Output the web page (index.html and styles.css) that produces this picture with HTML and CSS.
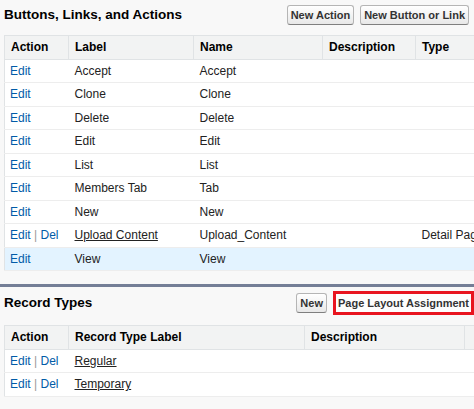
FILE: index.html
```html
<!DOCTYPE html>
<html lang="en">
<head>
  <meta charset="UTF-8">
  <title>Buttons, Links, and Actions</title>
  <link rel="stylesheet" href="styles.css">
</head>
<body>
  <div class="block">
    <div class="block-head">
      <h2>Buttons, Links, and Actions</h2>
      <div class="actions">
        <button class="btn">New Action</button>
        <button class="btn">New Button or Link</button>
      </div>
    </div>
    <table class="list wide">
      <colgroup>
        <col style="width:64px">
        <col style="width:125px">
        <col style="width:129px">
        <col style="width:93px">
        <col style="width:150px">
      </colgroup>
      <tr class="header">
        <th>Action</th><th>Label</th><th>Name</th><th>Description</th><th>Type</th>
      </tr>
      <tr><td><a href="#">Edit</a></td><td>Accept</td><td>Accept</td><td></td><td></td></tr>
      <tr><td><a href="#">Edit</a></td><td>Clone</td><td>Clone</td><td></td><td></td></tr>
      <tr><td><a href="#">Edit</a></td><td>Delete</td><td>Delete</td><td></td><td></td></tr>
      <tr><td><a href="#">Edit</a></td><td>Edit</td><td>Edit</td><td></td><td></td></tr>
      <tr><td><a href="#">Edit</a></td><td>List</td><td>List</td><td></td><td></td></tr>
      <tr><td><a href="#">Edit</a></td><td>Members Tab</td><td>Tab</td><td></td><td></td></tr>
      <tr><td><a href="#">Edit</a></td><td>New</td><td>New</td><td></td><td></td></tr>
      <tr><td><a href="#">Edit</a> <span class="sep">|</span> <a href="#">Del</a></td><td><a class="item" href="#">Upload Content</a></td><td>Upload_Content</td><td></td><td>Detail Page Button</td></tr>
      <tr class="highlight"><td><a href="#">Edit</a></td><td>View</td><td>View</td><td></td><td></td></tr>
    </table>
  </div>

  <div class="block second">
    <div class="block-head">
      <h2>Record Types</h2>
      <div class="actions">
        <button class="btn">New</button>
        <span class="marked"><button class="btn">Page Layout Assignment</button></span>
      </div>
    </div>
    <table class="list narrow">
      <colgroup>
        <col style="width:64px">
        <col style="width:236px">
        <col style="width:160px">
        <col style="width:60px">
      </colgroup>
      <tr class="header">
        <th>Action</th><th>Record Type Label</th><th>Description</th><th></th>
      </tr>
      <tr><td><a href="#">Edit</a> <span class="sep">|</span> <a href="#">Del</a></td><td><a class="item" href="#">Regular</a></td><td></td><td></td></tr>
      <tr><td><a href="#">Edit</a> <span class="sep">|</span> <a href="#">Del</a></td><td><a class="item" href="#">Temporary</a></td><td></td><td></td></tr>
    </table>
  </div>
</body>
</html>
```

FILE: styles.css
```css
body {
  margin: 0;
  background-color: #f8f8f8;
  font-family: "Liberation Sans", Arial, sans-serif;
  font-size: 12px;
  color: #222;
  overflow: hidden;
}

.block {
  padding: 0 0 0 4px;
}

.block.second {
  border-top: 3px solid #747e96;
  margin-top: 13px;
}

.block-head {
  display: flex;
  justify-content: space-between;
  align-items: flex-start;
  height: 30px;
  padding: 5px 5px 0 0;
}

.second .block-head {
  height: 34px;
  padding: 4px 0 0 0;
}

.block-head h2 {
  margin: 0;
  font-size: 13.5px;
  line-height: 19px;
  font-weight: bold;
  color: #000;
}

.second .block-head h2 {
  line-height: 24px;
}

.actions {
  display: flex;
  align-items: center;
  gap: 6px;
}

.btn {
  font-family: "Liberation Sans", Arial, sans-serif;
  font-size: 11px;
  font-weight: bold;
  color: #333;
  background: linear-gradient(#ffffff, #e8e8e8);
  border: 1px solid #b5b5b5;
  border-bottom-color: #7f7f7f;
  border-radius: 3px;
  padding: 2px 3px;
  height: 20px;
  cursor: pointer;
}

.marked {
  display: flex;
  border: 3px solid #e8141f;
}

.marked .btn {
  border: none;
  border-radius: 0;
  background: #fdfdfd;
  height: 18px;
  padding: 1px 2px;
}

.list {
  border-collapse: collapse;
  table-layout: fixed;
  background-color: #fff;
  border: 1px solid #e0e3e5;
}

.list.wide {
  width: 561px;
}

.list.narrow {
  width: 520px;
}

.list th {
  background-color: #f2f3f3;
  text-align: left;
  font-weight: bold;
  color: #000;
  height: 22.5px;
  padding: 0 6px;
  border-left: 1px solid #e0e3e5;
  border-bottom: 1px solid #e0e3e5;
}

.list td {
  height: 22.5px;
  padding: 0 6px;
  border-bottom: 1px solid #ededed;
  white-space: nowrap;
  overflow: hidden;
}

.list th:first-child {
  border-left: none;
}

.list a {
  color: #015ba7;
  text-decoration: none;
}

.list td:first-child {
  padding-left: 5px;
}

.list a.item {
  color: #222;
  text-decoration: underline;
}

.sep {
  color: #999;
}

.highlight td {
  background-color: #e3f3ff;
}
```
